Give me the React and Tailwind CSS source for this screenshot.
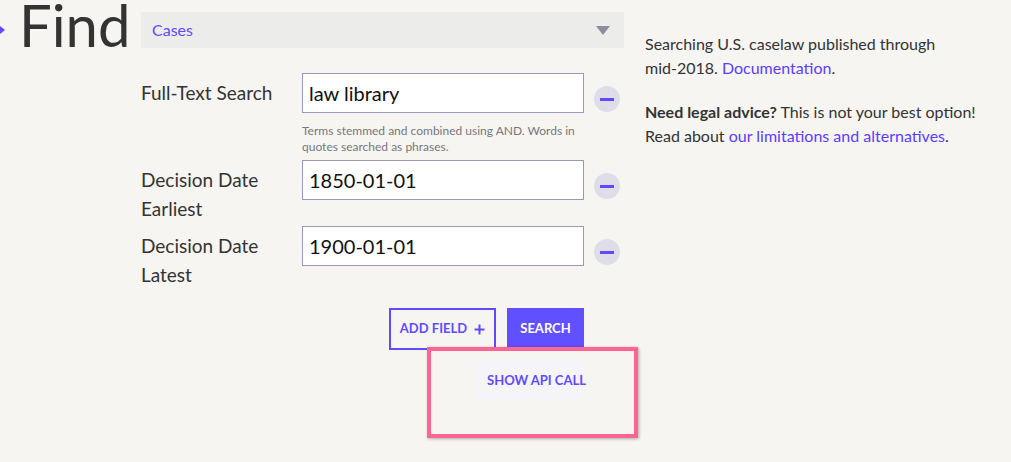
import React from "react";

function Minus() {
  return (
    <div className="ml-[10px] mt-[13px] w-[26px] h-[26px] rounded-full bg-[#dfdee8] flex items-center justify-center shrink-0">
      <div className="w-[14px] h-[3px] bg-[#5f4bff]" />
    </div>
  );
}

function Row({ label, value, help, className = "" }) {
  return (
    <div className={"flex items-start " + className}>
      <div className="w-[161px] pt-[5px] text-[19px] leading-[29px] text-[#333]">{label}</div>
      <div className="w-[282px]">
        <div className="h-[40px] bg-white border border-[#9b98c0] flex items-center px-[6px] text-[20px] text-[#111]">
          {value}
        </div>
        {help && (
          <div className="mt-[10px] text-[12px] leading-[16px] text-[#77777c]">{help}</div>
        )}
      </div>
      <Minus />
    </div>
  );
}

export default function App() {
  return (
    <div className="relative w-full h-[462px] bg-[#f6f5f2] overflow-hidden flex font-['Lato',sans-serif] text-[#333]">
      <div className="w-[624px] shrink-0">
        <div className="flex h-[48px]">
          <div className="w-[141px] flex items-start shrink-0">
            <div className="mt-[26px] w-0 h-0 border-y-[4px] border-y-transparent border-l-[5px] border-l-[#5f4bff]" />
            <div className="ml-[14px] mt-[-4px] text-[58px] leading-[58px] text-[#333]">Find</div>
          </div>
          <div className="flex-1 mt-[12px] h-[36px] bg-[#ececea] flex items-center justify-between pl-[11px] pr-[14px]">
            <span className="text-[16px] text-[#5f4bff]">Cases</span>
            <div className="w-0 h-0 border-x-[7px] border-x-transparent border-t-[9px] border-t-[#8e8c9f]" />
          </div>
        </div>
        <div className="pl-[141px] mt-[25px]">
          <Row
            label="Full-Text Search"
            value="law library"
            help="Terms stemmed and combined using AND. Words in quotes searched as phrases."
            className="mb-[5px]"
          />
          <Row label="Decision Date Earliest" value="1850-01-01" className="mb-[3px]" />
          <Row label="Decision Date Latest" value="1900-01-01" />
          <div className="w-[443px] mt-[19px] flex justify-end gap-[11px]">
            <button className="h-[42px] w-[107px] border-2 border-[#5f4bff] text-[#5f4bff] font-bold text-[13px] flex items-center justify-center gap-[7px] bg-[#f6f5f2]">
              ADD FIELD
              <svg width="11" height="11" viewBox="0 0 11 11">
                <path d="M5.5 0.5v10M0.5 5.5h10" stroke="#5f4bff" strokeWidth="2" />
              </svg>
            </button>
            <button className="h-[42px] w-[77px] bg-[#6150ff] text-white font-bold text-[13px] flex items-center justify-center">
              SEARCH
            </button>
          </div>
          <div className="pl-[334px] mt-[11px]">
            <button className="h-[39px] w-[108px] bg-[#f5f4f8] text-[#5f4bff] font-bold text-[13px] pl-[12px] text-left whitespace-nowrap">
              SHOW API CALL
            </button>
          </div>
        </div>
      </div>
      <div className="ml-[21px] pt-[32px] w-[345px] text-[16px] leading-[24px] text-[#333]">
        <p>
          Searching U.S. caselaw published through
          <br />
          mid-2018. <span className="text-[#5b3dff]">Documentation</span>.
        </p>
        <p className="mt-[20px]">
          <b>Need legal advice?</b> This is not your best option!
          <br />
          Read about <span className="text-[#5b3dff]">our limitations and alternatives</span>.
        </p>
      </div>
      <div className="absolute left-[427px] top-[347px] w-[211px] h-[91px] border-4 border-[#ff6592] shadow-[1px_1px_3px_rgba(0,0,0,0.3)]" />
    </div>
  );
}
